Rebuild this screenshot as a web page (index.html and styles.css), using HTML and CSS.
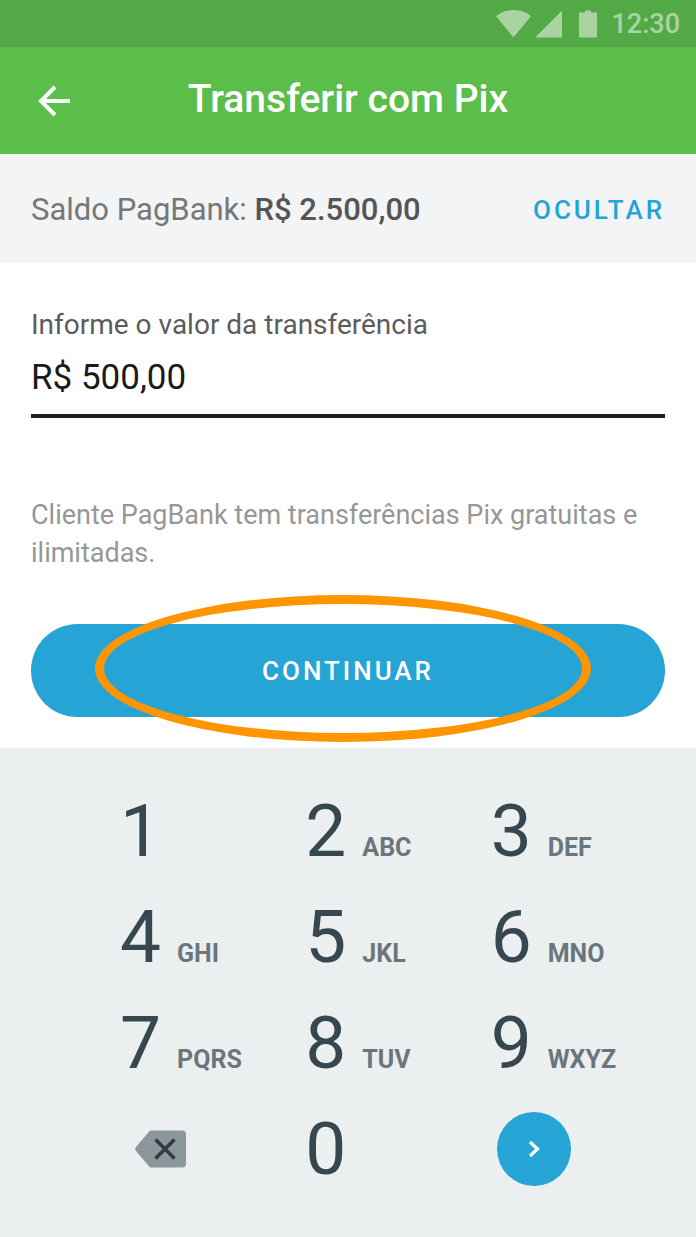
FILE: index.html
```html
<!DOCTYPE html>
<html lang="pt-BR">
<head>
<meta charset="utf-8">
<meta name="viewport" content="width=device-width, initial-scale=1">
<title>Transferir com Pix</title>
<link rel="stylesheet" href="styles.css">
</head>
<body>
<div class="status">
  <svg class="status-wifi" width="35" height="28" viewBox="0 0 35 28" aria-hidden="true"><path d="M0 6.200C9-2 26-2 35 6.200L17.500 27.500Z" fill="currentColor"/></svg>
  <svg class="status-signal" width="27" height="28" viewBox="0 0 27 28" aria-hidden="true"><path d="M27 .5V27.500H0Z" fill="currentColor"/></svg>
  <svg class="status-battery" width="18" height="28" viewBox="0 0 18 28" aria-hidden="true"><path d="M6 .5h6v2h6v25H0v-25h6Z" fill="currentColor"/></svg>
  <span class="status-time">12:30</span>
</div>
<header class="header">
  <button class="back" type="button" aria-label="Voltar">
    <svg width="32" height="32" viewBox="0 0 32 32" fill="none" stroke="currentColor" stroke-width="4" aria-hidden="true"><path d="M32 16H3M17 2 3 16l14 14"/></svg>
  </button>
  <h1 class="title">Transferir com Pix</h1>
</header>
<section class="balance">
  <p class="balance-text">Saldo PagBank: <strong class="balance-value">R$ 2.500,00</strong></p>
  <button class="hide" type="button">OCULTAR</button>
</section>
<main class="form">
  <label class="label" for="amount">Informe o valor da transferência</label>
  <input class="amount" id="amount" type="text" inputmode="decimal" value="R$ 500,00">
  <p class="help">Cliente PagBank tem transferências Pix gratuitas e ilimitadas.</p>
  <div class="action">
    <button class="continue" type="button">CONTINUAR</button>
    <span class="highlight"></span>
  </div>
</main>
<div class="keypad">
  <button class="key" type="button">1</button>
  <button class="key" type="button">2<span class="letters">ABC</span></button>
  <button class="key" type="button">3<span class="letters">DEF</span></button>
  <button class="key" type="button">4<span class="letters">GHI</span></button>
  <button class="key" type="button">5<span class="letters">JKL</span></button>
  <button class="key" type="button">6<span class="letters">MNO</span></button>
  <button class="key" type="button">7<span class="letters">PQRS</span></button>
  <button class="key" type="button">8<span class="letters">TUV</span></button>
  <button class="key" type="button">9<span class="letters">WXYZ</span></button>
  <button class="erase" type="button" aria-label="Apagar">
    <svg width="51" height="38" viewBox="0 0 51 38" aria-hidden="true"><path d="M15 .5H47Q51 .5 51 4.500V33.500Q51 37.500 47 37.500H15L1 21Q-.5 19 1 17Z" fill="#8b979b"/><path d="M20.500 9.500l19 19m0-19l-19 19" stroke="#303c43" stroke-width="3.600"/></svg>
  </button>
  <button class="key" type="button">0</button>
  <button class="next" type="button" aria-label="Avançar">
    <svg width="12" height="18" viewBox="0 0 12 18" fill="none" stroke="currentColor" stroke-width="3.200" aria-hidden="true"><path d="M2 2l7.500 7L2 16"/></svg>
  </button>
</div>
</body>
</html>
```
FILE: styles.css
```css
* {
  box-sizing: border-box;
}

body {
  margin: 0;
  min-height: 100vh;
  display: flex;
  flex-direction: column;
  background: #fff;
  font-family: Roboto, "Liberation Sans", sans-serif;
}

button {
  margin: 0;
  padding: 0;
  border: 0;
  background: none;
  font: inherit;
  cursor: pointer;
}

svg {
  display: block;
}

.status {
  display: flex;
  align-items: center;
  justify-content: flex-end;
  height: 47px;
  padding: 0 16px;
  background: #53a946;
  color: #a9d4a2;
}

.status-signal {
  margin: 0 17px 0 4px;
}

.status-time {
  margin-left: 14px;
  font-size: 27px;
  font-weight: 500;
}

.header {
  display: grid;
  grid-template-columns: 1fr auto 1fr;
  align-items: center;
  height: 107px;
  padding: 0 38px;
  background: #5cbe4a;
  color: #fff;
}

.back {
  justify-self: start;
  color: #fff;
}

.title {
  margin: 0;
  padding-bottom: 3px;
  font-size: 39px;
  font-weight: 500;
  line-height: 44px;
}

.balance {
  display: flex;
  align-items: center;
  justify-content: space-between;
  height: 109px;
  padding: 2px 31px 0;
  background: #f2f4f6;
}

.balance-text {
  margin: 0;
  font-size: 31px;
  color: #777;
}

.balance-value {
  font-weight: 500;
  color: #555;
}

.hide {
  font-size: 26px;
  font-weight: 500;
  letter-spacing: 3px;
  color: #25a4d5;
}

.form {
  display: flex;
  flex-direction: column;
  padding: 43px 31px 31px;
}

.label {
  font-size: 28px;
  line-height: 38px;
  color: #5c5c5c;
}

.amount {
  width: 100%;
  height: 74px;
  padding: 0 0 4px;
  border: 0;
  border-bottom: 4px solid #1f1f21;
  border-radius: 0;
  outline: 0;
  font-family: inherit;
  font-size: 35px;
  color: #1a1a1a;
}

.help {
  margin: 78px 0 52px;
  font-size: 27px;
  line-height: 38px;
  color: #979797;
}

.action {
  position: relative;
}

.continue {
  display: block;
  width: 100%;
  height: 93px;
  border-radius: 47px;
  background: #25a4d5;
  color: #fff;
  font-size: 26px;
  font-weight: 500;
  letter-spacing: 3px;
}

.highlight {
  position: absolute;
  top: -29px;
  right: 74px;
  bottom: -25px;
  left: 64px;
  border: 9px solid #ff9500;
  border-radius: 50%;
  pointer-events: none;
}

.keypad {
  flex: 1;
  display: grid;
  grid-template-columns: repeat(3, 1fr);
  grid-auto-rows: 106px;
  padding: 30px 20px 30px 120px;
  background: #ebeff0;
}

.key {
  display: flex;
  align-items: baseline;
  gap: 16px;
  font-size: 73px;
  line-height: 106px;
  color: #37474f;
}

.letters {
  font-size: 25px;
  font-weight: 700;
  line-height: 30px;
  color: #6a767c;
}

.erase {
  place-self: center start;
  margin-left: 15px;
}

.next {
  display: flex;
  align-items: center;
  justify-content: center;
  align-self: center;
  width: 74px;
  height: 74px;
  margin-left: 6px;
  border-radius: 50%;
  background: #25a4d5;
  color: #fff;
}
```
